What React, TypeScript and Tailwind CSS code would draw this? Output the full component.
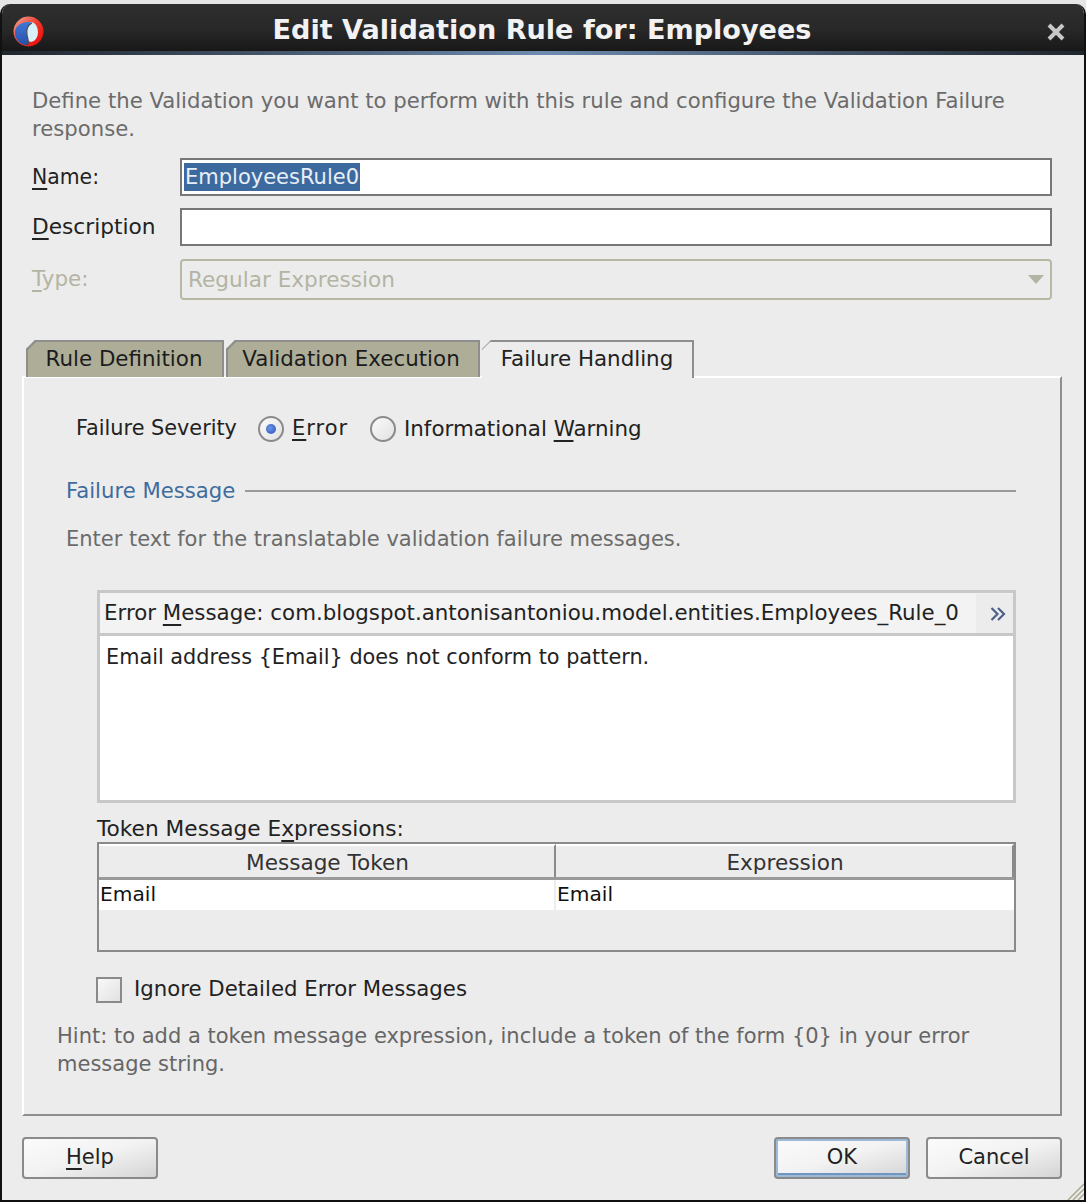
const font = "[font-family:'DejaVu_Sans',sans-serif]";

const Tab = ({ label, active, className }: { label: string; active?: boolean; className: string }) => (
  <div
    className={`relative flex h-[37px] items-start justify-center border-x-2 border-t-2 border-[#8e8e8e] pt-[2px] text-[21.400px] leading-[30px] [clip-path:polygon(9px_0,100%_0,100%_100%,0_100%,0_9px)] ${
      active ? "z-10 h-[38px] border-l-0 bg-[#ececec] text-[#222]" : "bg-[#aeae98] text-[#1c1c1c]"
    } ${className}`}
  >
    {label}
    <svg className="absolute -left-[2px] -top-[2px] h-[12px] w-[12px]" viewBox="0 0 12 12">
      <path d="M0 10 L10 0" stroke="#8e8e8e" strokeWidth="3" />
    </svg>
  </div>
);

const Button = ({ children, def, className }: { children: React.ReactNode; def?: boolean; className?: string }) => (
  <button
    className={`flex h-[42px] w-[136px] items-center justify-center rounded-[4px] border-2 border-[#8a8a8a] bg-gradient-to-br from-[#fbfbfb] via-[#f2f2f2] to-[#d4d4d4] text-[21px] text-[#222] ${
      def ? "shadow-[inset_0_0_0_2px_#9db9d8,inset_0_-2px_0_2px_#6f95c0]" : ""
    } ${className ?? ""}`}
  >
    {children}
  </button>
);

const Radio = ({ checked }: { checked?: boolean }) => (
  <span className="flex h-[26px] w-[26px] items-center justify-center rounded-full border-2 border-[#8a8a8a] bg-gradient-to-br from-[#fafafa] to-[#e2e2e2]">
    {checked && <span className="h-[10px] w-[10px] rounded-full bg-[radial-gradient(circle_at_40%_40%,#6f96e6,#2450bc)]" />}
  </span>
);

const Logo = () => (
  <svg width="31" height="31" viewBox="0 0 31 31" className="shrink-0">
    <defs>
      <linearGradient id="red" x1="0" y1="0" x2="1" y2="1">
        <stop offset="0" stopColor="#eeb0a0" />
        <stop offset="0.45" stopColor="#f04030" />
        <stop offset="1" stopColor="#e80000" />
      </linearGradient>
      <linearGradient id="blue" x1="0" y1="0" x2="0" y2="1">
        <stop offset="0" stopColor="#3f78d8" />
        <stop offset="1" stopColor="#2a50a8" />
      </linearGradient>
    </defs>
    <circle cx="15.500" cy="15.500" r="15" fill="url(#red)" />
    <ellipse cx="18" cy="16" rx="7" ry="10" fill="#d8f0f8" />
    <path d="M15 6 C 8 6 2 10 2 17 C 2 24 8 29 13 29 C 17 29 15 24 14 19 C 13 13 15 9 19 7 C 18 6 17 6 15 6 Z" fill="url(#blue)" />
    <path d="M19 7 C 15 9 13 13 14 19 C 15 24 17 29 13 29" fill="none" stroke="#4a4a58" strokeWidth="1.200" />
  </svg>
);

export default function App() {
  return (
    <div className={`h-[1202px] w-[1086px] overflow-hidden bg-[#e6e6e6] pt-1 ${font}`}>
      <div className="relative flex h-[1198px] flex-col overflow-hidden rounded-t-[10px] border-x-2 border-b-2 border-[#111] bg-[#ececec]">
        {/* title bar */}
        <div className="relative flex h-[51px] shrink-0 items-center justify-center bg-gradient-to-b from-[#2f2f2f] via-[#282828] to-[#151515]">
          <div className="absolute left-[11px] top-[12px]">
            <Logo />
          </div>
          <span className="-ml-[2px] mt-[1px] text-[27.100px] font-bold text-[#f2f2f2]">Edit Validation Rule for: Employees</span>
          <svg className="absolute right-[19px] top-[19px]" width="18" height="18" viewBox="0 0 18 18">
            <path d="M2 2 L16 16 M16 2 L2 16" stroke="#c8c8c8" strokeWidth="4" />
          </svg>
          <div className="absolute bottom-0 left-0 right-0 h-[4px] bg-gradient-to-r from-[#20262e] via-[#6d8cb0] to-[#20262e]" />
        </div>

        <div className="flex flex-1 flex-col pl-[20px] pr-[22px]">
          <p className="ml-[10px] mt-[32px] w-[1000px] text-[21.200px] leading-[28px] text-[#6b6b6b]">
            Define the Validation you want to perform with this rule and configure the Validation Failure response.
          </p>

          {/* form */}
          <div className="ml-[10px] mt-[15px] flex w-[1020px] flex-col text-[21px]">
            <div className="flex h-[38px] items-center">
              <label className="w-[148px] pt-[1px] text-[20.400px] text-[#222]">
                <span className="underline underline-offset-4">N</span>ame:
              </label>
              <div className="flex h-[38px] flex-1 items-center border-2 border-[#777] bg-white pl-[2px]">
                <span className="bg-[#3d6a9e] px-px leading-[28px] text-[#e8eef6]">EmployeesRule0</span>
              </div>
            </div>
            <div className="mt-[12px] flex h-[38px] items-center">
              <label className="w-[148px] pt-[1px] text-[21.700px] text-[#222]">
                <span className="underline underline-offset-4">D</span>escription
              </label>
              <div className="h-[38px] flex-1 border-2 border-[#777] bg-white" />
            </div>
            <div className="mt-[13px] flex h-[41px] items-center">
              <label className="w-[148px] text-[21.400px] text-[#b4b4a4]">
                <span className="underline underline-offset-4">T</span>ype:
              </label>
              <div className="flex h-[41px] flex-1 items-center justify-between rounded-[4px] border-2 border-[#b8b8a4] pl-[6px] pr-[6px] text-[#b4b4a4]">
                <span className="pt-[1px] text-[21.600px]">Regular Expression</span>
                <span className="h-0 w-0 border-x-[8px] border-t-[9px] border-x-transparent border-t-[#b4b4a4]" />
              </div>
            </div>
          </div>

          {/* tabs */}
          <div className="relative z-10 ml-[4px] mt-[40px] flex gap-[2px]">
            <Tab label="Rule Definition" className="w-[198px] pr-[2px]" />
            <Tab label="Validation Execution" className="w-[254px] pr-[4px]" />
            <Tab label="Failure Handling" active className="w-[212px]" />
          </div>

          {/* panel */}
          <div className="-mt-[2px] flex h-[740px] flex-col border-2 border-b-[#8e8e8e] border-l-white border-r-[#8e8e8e] border-t-white text-[21px]">
            <div className="ml-[52px] mt-[36px] flex h-[30px] items-center text-[#222]">
              <span className="w-[182px] text-[20.800px]">Failure Severity</span>
              <Radio checked />
              <span className="ml-[8px] w-[78px] tracking-[1px]">
                <span className="underline underline-offset-4">E</span>rror
              </span>
              <Radio />
              <span className="ml-[8px] text-[21.400px]">
                Informational <span className="underline underline-offset-4">W</span>arning
              </span>
            </div>

            <div className="ml-[42px] mr-[44px] mt-[32px] flex h-[30px] items-center gap-[10px]">
              <span className="text-[21.200px] text-[#3f6c9e]">Failure Message</span>
              <div className="h-[2px] flex-1 bg-[#9a9a9a]" />
            </div>
            <p className="ml-[42px] mt-[18px] leading-[30px] text-[#6b6b6b]">
              Enter text for the translatable validation failure messages.
            </p>

            {/* error message */}
            <div className="ml-[73px] mr-[44px] mt-[36px] flex h-[213px] flex-col border-[3px] border-[#c8c8c8]">
              <div className="flex h-[40px] shrink-0 items-center bg-[#f3f3f3] pt-[1px] text-[21.350px] text-[#222]">
                <span className="flex-1 whitespace-nowrap pl-[4px]">
                  Error <span className="underline underline-offset-4">M</span>essage: com.blogspot.antonisantoniou.model.entities.Employees_Rule_0
                </span>
                <span className="flex h-full w-[37px] shrink-0 items-center justify-center bg-[#ececec] pl-[6px]">
                  <svg width="16" height="16" viewBox="0 0 16 16">
                    <path d="M1.500 2 L7.500 8 L1.500 14 M8 2 L14 8 L8 14" fill="none" stroke="#4f6088" strokeWidth="2.200" />
                  </svg>
                </span>
              </div>
              <div className="flex-1 border-t-[3px] border-[#c8c8c8] bg-white px-[6px] pt-[6px] text-[20.800px] leading-[30px] text-[#222]">
                {"Email address {Email} does not conform to pattern."}
              </div>
            </div>

            <div className="ml-[73px] mt-[12px] h-[27px] text-[21.700px] leading-[28px] text-[#222]">
              Token Message E<span className="underline underline-offset-4">x</span>pressions:
            </div>

            {/* token table */}
            <div className="ml-[73px] mr-[44px] h-[110px] border-2 border-[#8a8a8a]">
              <div className="flex h-[36px] border-b-[3px] border-[#9a9a9a] text-[21.600px] text-[#333]">
                <div className="flex w-[457px] items-center justify-center border-r-2 border-t-2 border-r-[#8a8a8a] border-t-white pl-[2px] pt-[4px]">Message Token</div>
                <div className="flex flex-1 items-center justify-center border-r-2 border-t-2 border-r-[#8a8a8a] border-t-white pl-[2px] pt-[4px]">Expression</div>
              </div>
              <div className="flex h-[30px] bg-white text-[20.200px] leading-[28px] text-[#111]">
                <div className="w-[457px] border-r-2 border-[#ececec] pl-[1px]">Email</div>
                <div className="flex-1 pl-[1px]">Email</div>
              </div>
            </div>

            <div className="ml-[72px] mt-[24px] flex h-[28px] items-center text-[21.250px] text-[#222]">
              <span className="h-[26px] w-[26px] border-2 border-[#8a8a8a] bg-gradient-to-br from-[#f8f8f8] to-[#e2e2e2]" />
              <span className="ml-[12px] pb-[2px]">Ignore Detailed Error Messages</span>
            </div>

            <p className="ml-[33px] mt-[18px] w-[950px] leading-[28px] text-[#666]">
              {"Hint: to add a token message expression, include a token of the form {0} in your error message string."}
            </p>
          </div>

          {/* buttons */}
          <div className="mt-[21px] flex items-center">
            <Button>
              <span className="underline underline-offset-4">H</span>elp
            </Button>
            <Button def className="ml-auto">OK</Button>
            <Button className="ml-[16px]">Cancel</Button>
          </div>
        </div>

        {/* resize grip */}
        <svg className="absolute bottom-0 right-0" width="18" height="18" viewBox="0 0 18 18">
          <path d="M2 18 L18 2 M7 18 L18 7 M12 18 L18 12" stroke="#a8a890" strokeWidth="1.500" />
        </svg>
      </div>
    </div>
  );
}
